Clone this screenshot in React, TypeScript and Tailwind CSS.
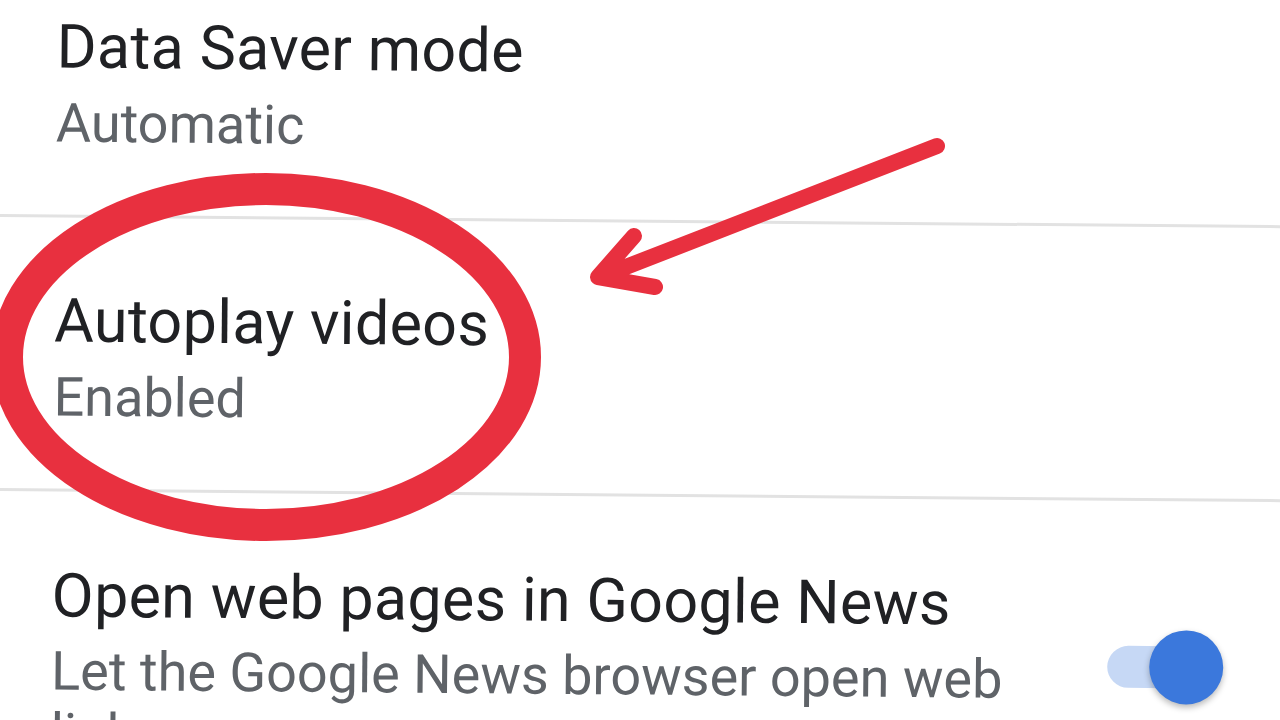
import React from "react";

type Setting = {
  title: string;
  summary: string;
};

const SETTINGS: Setting[] = [
  { title: "Data Saver mode", summary: "Automatic" },
  { title: "Autoplay videos", summary: "Enabled" },
];

function Divider() {
  return <div className="h-[3px] w-full bg-[#e2e2e2]" />;
}

function SettingRow({ setting, first }: { setting: Setting; first?: boolean }) {
  return (
    <div className={`${first ? "pt-[10px]" : "pt-[67px]"} pb-[55px] pl-[57px]`}>
      <div className="text-[61px] leading-[72px] tracking-[0.3px] text-[#202124]">
        {setting.title}
      </div>
      <div className="mt-[5px] text-[54px] leading-[72px] text-[#5f6368]">{setting.summary}</div>
    </div>
  );
}

function Toggle() {
  return (
    <div className="relative mt-[61px] h-[74px] w-[116px] flex-none">
      <div className="absolute left-0 top-[16px] h-[42px] w-[100px] rounded-full bg-[#c6d8f5]" />
      <div className="absolute right-0 top-0 h-[74px] w-[74px] rounded-full bg-[#3b78dc] shadow-[0_3px_6px_rgba(0,0,0,0.28)]" />
    </div>
  );
}

function Annotation() {
  return (
    <svg
      className="pointer-events-none absolute inset-0"
      width="1280"
      height="720"
      viewBox="0 0 1280 720"
      fill="none"
    >
      <ellipse cx="266" cy="357" rx="259" ry="168" stroke="#e8303f" strokeWidth="32" />
      <path
        d="M937 146 L600 277 M634 236 L598 277 L655 287"
        stroke="#e8303f"
        strokeWidth="16"
        strokeLinecap="round"
        strokeLinejoin="round"
      />
    </svg>
  );
}

export default function App() {
  return (
    <div className="relative h-[720px] w-[1280px] overflow-hidden bg-white font-['Roboto',sans-serif]">
      <div className="w-[1300px] origin-top-left rotate-[0.5deg]">
        <SettingRow setting={SETTINGS[0]} first />
        <Divider />
        <SettingRow setting={SETTINGS[1]} />
        <Divider />
        <div className="flex items-start pl-[57px] pr-[71px] pt-[68px]">
          <div className="w-[980px]">
            <div className="text-[61px] leading-[72px] tracking-[0.3px] text-[#202124]">
              Open web pages in Google News
            </div>
            <div className="mt-[9px] text-[54px] leading-[62px] text-[#5f6368]">
              Let the Google News browser open web links
            </div>
          </div>
          <div className="flex-1" />
          <Toggle />
        </div>
      </div>
      <Annotation />
    </div>
  );
}
